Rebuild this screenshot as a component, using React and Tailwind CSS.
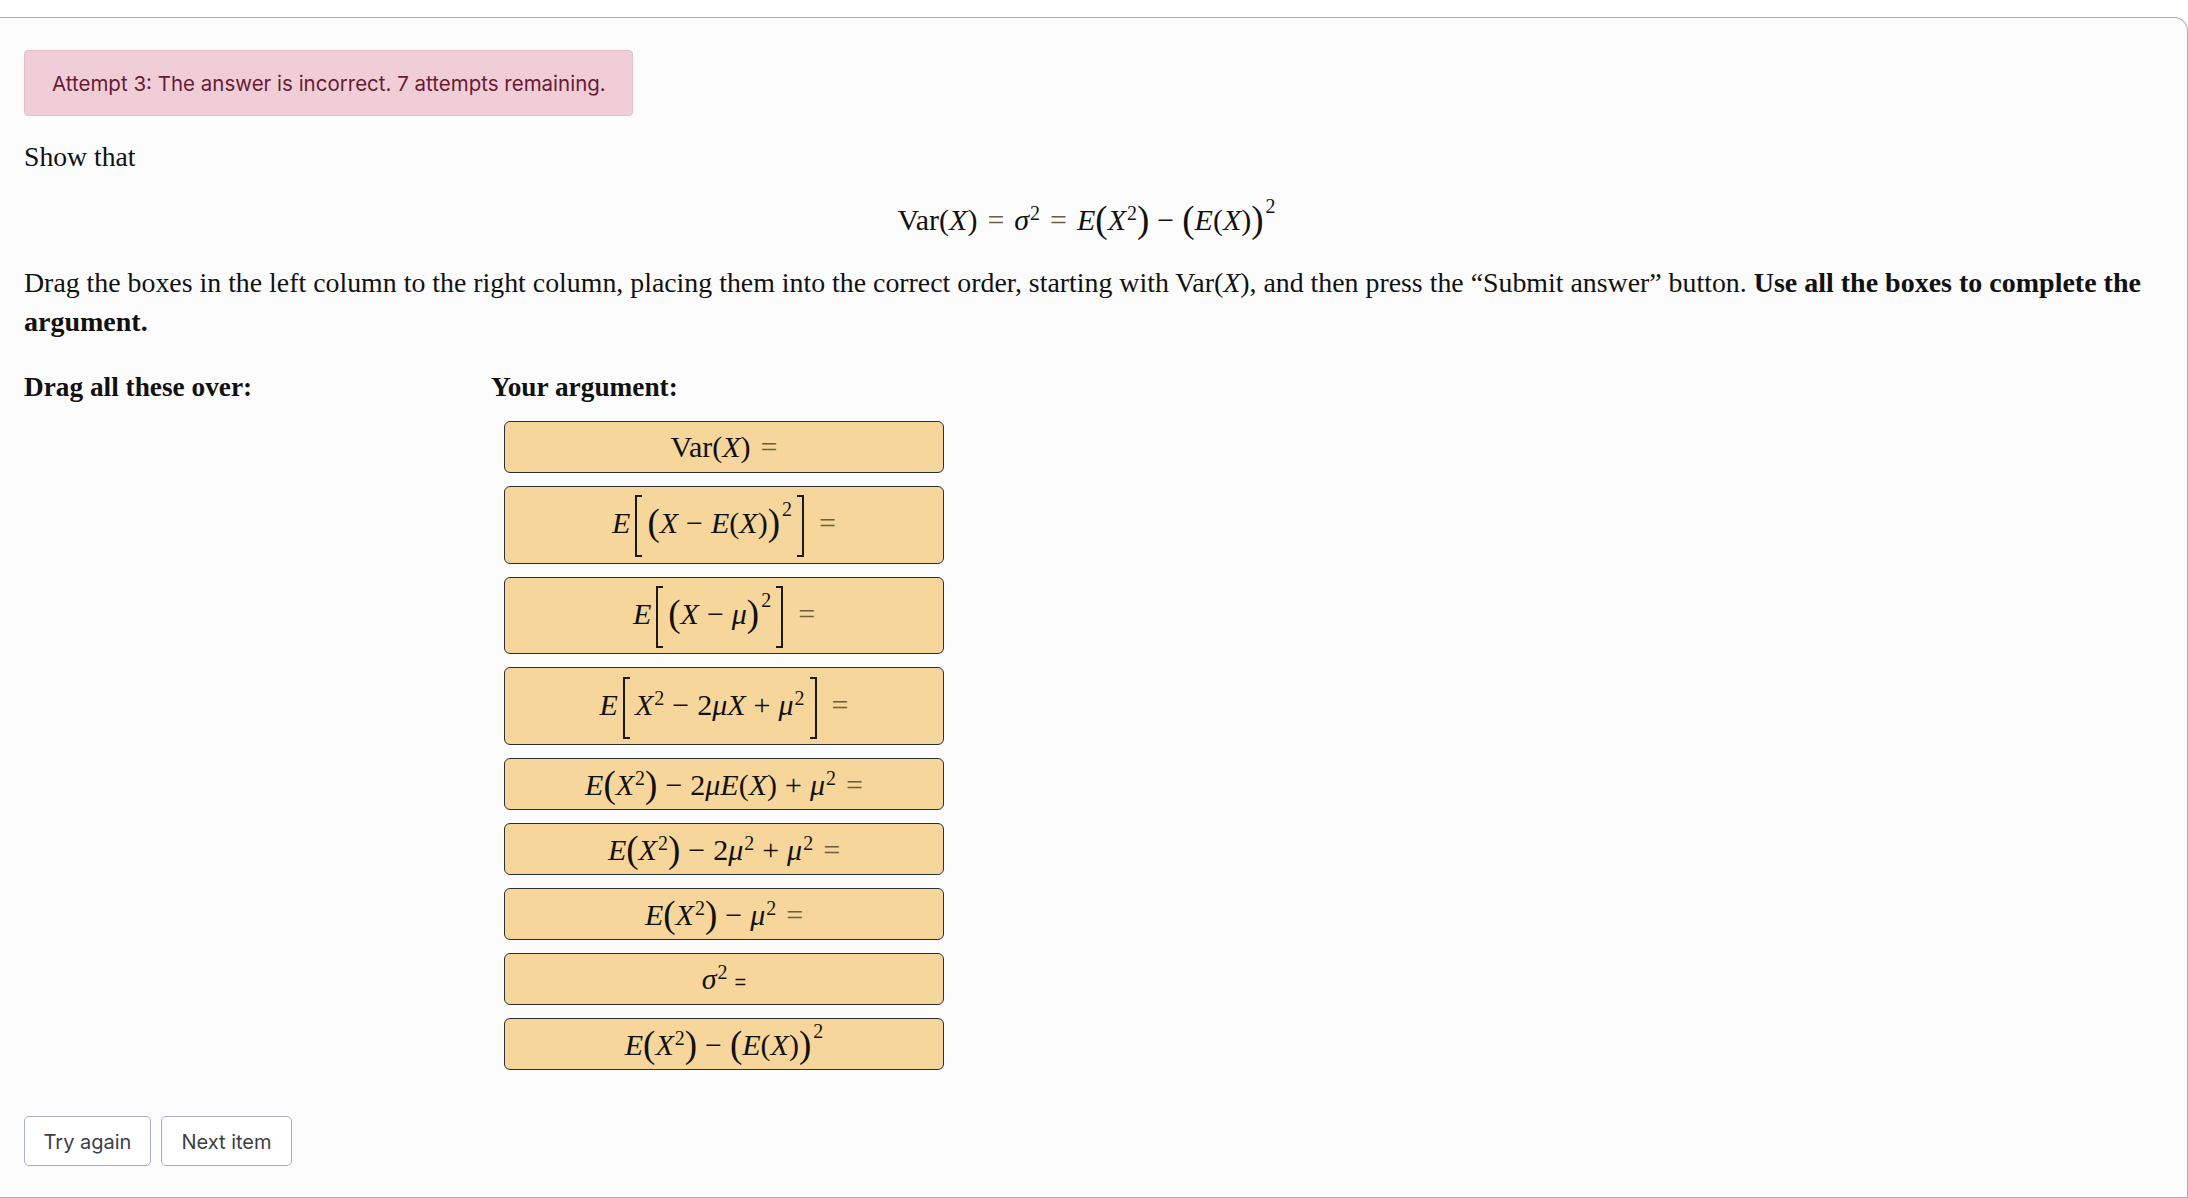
const Eq = ({ end = false }) => <span className={`text-[#6b5e42] ${end ? 'ml-[10px]' : 'mx-[10px]'}`}>=</span>;
const Minus = () => <span className="mx-[8px]">−</span>;
const Plus = () => <span className="mx-[8px]">+</span>;
const X = () => <i>X</i>;
const E = () => <i>E</i>;
const Mu = () => <i>μ</i>;
const Two = () => <sup className="text-[20px] ml-[1px]">2</sup>;
const LP = () => <span className="text-[37px] font-light leading-none align-[-2px]">(</span>;
const RP = () => <span className="text-[37px] font-light leading-none align-[-2px]">)</span>;
const LB = () => <span className="inline-block h-[62px] w-[7px] border-y-2 border-l-2 border-[#1a1a1a] align-middle mx-[5px]" />;
const RB = () => <span className="inline-block h-[62px] w-[7px] border-y-2 border-r-2 border-[#1a1a1a] align-middle mx-[5px]" />;
const Big2 = () => <sup className="text-[20px] ml-[2px] -top-[0.85em]">2</sup>;

const EX2 = () => (
  <>
    <E />
    <LP />
    <X />
    <Two />
    <RP />
  </>
);

const rows = [
  {
    tall: false,
    math: (
      <>
        Var(<X />)<Eq end />
      </>
    ),
  },
  {
    tall: true,
    math: (
      <>
        <E />
        <LB />
        <LP />
        <X />
        <Minus />
        <E />(<X />)<RP />
        <Big2 />
        <RB />
        <Eq end />
      </>
    ),
  },
  {
    tall: true,
    math: (
      <>
        <E />
        <LB />
        <LP />
        <X />
        <Minus />
        <Mu />
        <RP />
        <Big2 />
        <RB />
        <Eq end />
      </>
    ),
  },
  {
    tall: true,
    math: (
      <>
        <E />
        <LB />
        <X />
        <Two />
        <Minus />2<Mu />
        <X />
        <Plus />
        <Mu />
        <Two />
        <RB />
        <Eq end />
      </>
    ),
  },
  {
    tall: false,
    math: (
      <>
        <EX2 />
        <Minus />2<Mu />
        <E />(<X />)<Plus />
        <Mu />
        <Two />
        <Eq end />
      </>
    ),
  },
  {
    tall: false,
    math: (
      <>
        <EX2 />
        <Minus />2<Mu />
        <Two />
        <Plus />
        <Mu />
        <Two />
        <Eq end />
      </>
    ),
  },
  {
    tall: false,
    math: (
      <>
        <EX2 />
        <Minus />
        <Mu />
        <Two />
        <Eq end />
      </>
    ),
  },
  {
    tall: false,
    math: (
      <>
        <i>σ</i>
        <Two />
        <span className="ml-[7px] font-['Liberation_Sans',sans-serif] text-[20px]">=</span>
      </>
    ),
  },
  {
    tall: false,
    math: (
      <>
        <EX2 />
        <Minus />
        <LP />
        <E />(<X />)<RP />
        <Big2 />
      </>
    ),
  },
];

export default function App() {
  return (
    <div className="min-h-[1198px] bg-white pt-[17px] font-['Liberation_Serif',serif] text-[#111]">
      <div className="h-[1181px] rounded-tr-[14px] border-y border-r border-[#aeb0b6] bg-[#fcfcfd] pl-[24px] pr-[24px] pt-[32px]">
        <div className="flex h-[66px] w-[609px] items-center whitespace-nowrap rounded-[4px] border border-[#e9bcc9] bg-[#f0ced8] pl-[27px] pt-[3px] font-['Inter',sans-serif] text-[20.5px] text-[#6a1a33]">
          Attempt 3: The answer is incorrect. 7 attempts remaining.
        </div>

        <p className="mt-[21px] text-[27.7px] leading-[39px]">Show that</p>

        <div className="mr-[14px] mt-[24px] h-[40px] whitespace-nowrap text-center text-[30px] leading-[40px]">
          Var(<X />)<Eq />
          <i>σ</i>
          <Two />
          <Eq />
          <EX2 />
          <Minus />
          <LP />
          <E />(<X />)<RP />
          <Big2 />
        </div>

        <p className="mt-[23px] text-[27.85px] leading-[39px]">
          Drag the boxes in the left column to the right column, placing them into the correct order, starting with Var(
          <X />
          ), and then press the “Submit answer” button. <b className="text-[28px]">Use all the boxes to complete the argument.</b>
        </p>

        <div className="mt-[27px] flex">
          <h3 className="w-[467px] text-[27.3px] font-bold leading-[39px]">Drag all these over:</h3>
          <div className="w-[453px]">
            <h3 className="text-[27.3px] font-bold leading-[39px]">Your argument:</h3>
            <div className="ml-[13px] mt-[14px] flex w-[440px] flex-col gap-[13px]">
              {rows.map((row, i) => (
                <div
                  key={i}
                  className={`flex ${row.tall ? 'h-[77.7px] pt-[3px]' : 'h-[52px]'} items-center justify-center rounded-[6px] border border-[#2b3038] bg-[#f7d69b] text-[30px]`}
                >
                  <span className="whitespace-nowrap leading-none">{row.math}</span>
                </div>
              ))}
            </div>
          </div>
        </div>

        <div className="mt-[45.5px] flex gap-[10px] font-['Inter',sans-serif] text-[20px] text-[#3b4046]">
          <button type="button" className="h-[50px] w-[127px] rounded-[5px] border border-[#aab0bb] bg-white pt-[2px]">
            Try again
          </button>
          <button type="button" className="h-[50px] w-[131px] rounded-[5px] border border-[#aab0bb] bg-white pt-[2px]">
            Next item
          </button>
        </div>
      </div>
    </div>
  );
}
